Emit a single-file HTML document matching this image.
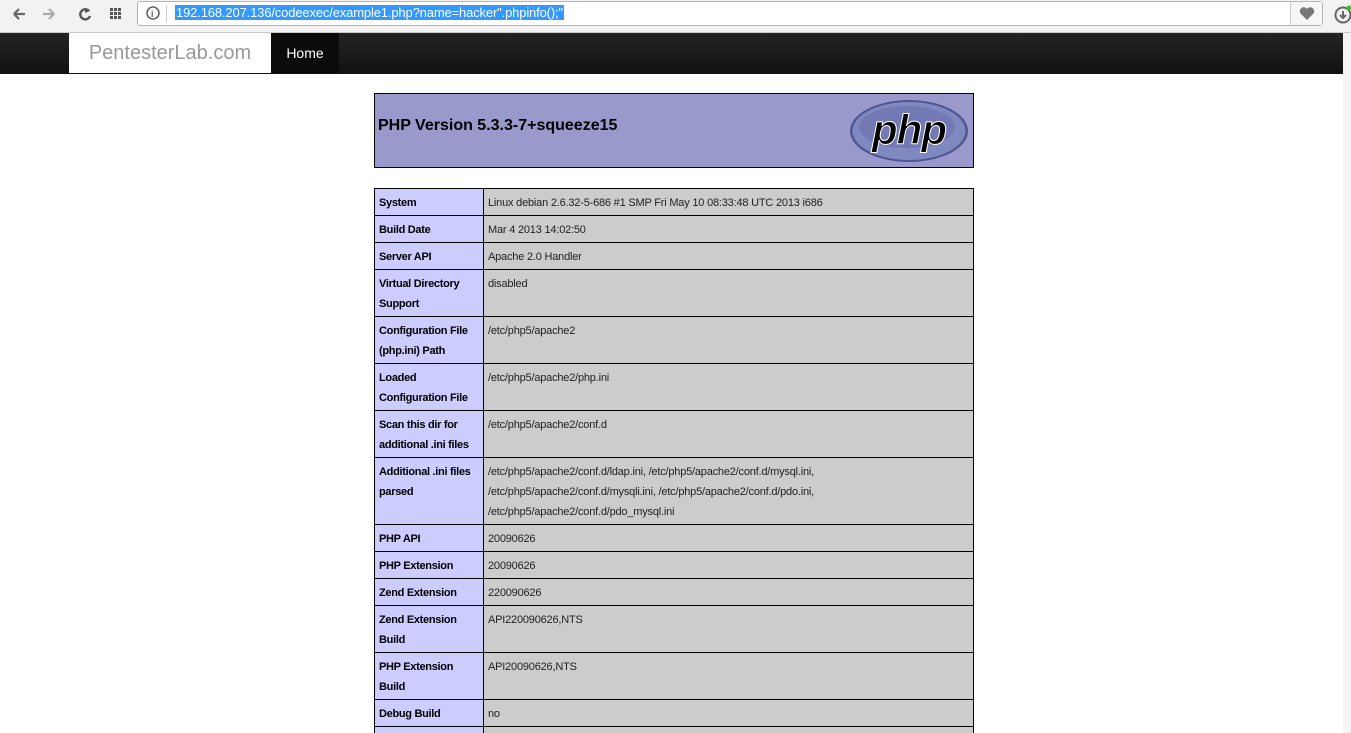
<!DOCTYPE html>
<html><head><meta charset="utf-8"><style>
*{margin:0;padding:0;box-sizing:border-box}
html,body{width:1351px;height:733px;overflow:hidden}
body{background:#fff;font-family:"Liberation Sans",Arial,sans-serif;position:relative}
.chrome{position:absolute;left:0;top:0;width:1351px;height:33px;background:#f2f2f2;border-bottom:1px solid #c8c8c8}
.url{position:absolute;left:137px;top:1px;width:1186px;height:25px;background:#fff;border:1px solid #b5b5b5;border-radius:3px}
.sel{position:absolute;left:175px;top:5px;background:#3399ff;color:#fff;font-size:13px;line-height:15px;padding:0 1px;letter-spacing:-0.15px}
.nav{position:absolute;left:0;top:33px;width:1343px;height:41px;background:linear-gradient(#242424,#111)}
.logo{position:absolute;left:69px;top:0;width:202px;height:40px;background:#fff;color:#999;font-size:20px;line-height:40px;text-align:center}
.home{position:absolute;left:271px;top:0;width:68px;height:40px;background:#0b0b0b;color:#fff;font-size:14px;line-height:40px;text-align:center}
.hdr{position:absolute;left:374px;top:93px;width:600px;height:75px;background:#9999cc;border:1px solid #000}
.hdr h1{position:absolute;left:3px;top:23px;font-size:16px;font-weight:bold;color:#000}
.c{position:absolute;border:1px solid #000;font-size:11px;line-height:20px;padding:4px 3px 0 4px;color:#000;letter-spacing:-0.2px}
.l{left:374px;width:110px;background:#ccccff;font-weight:bold;letter-spacing:-0.3px}
.v{left:483px;width:491px;background:#cccccc;color:#222}
.sb{position:absolute;left:1343px;top:33px;width:8px;height:700px;background:#f4f4f4}
</style></head><body>
<div class="chrome">
<svg style="position:absolute;left:12px;top:7px" width="100" height="14"><path d="M2 7h11M2 7l5-5M2 7l5 5" stroke="#666" stroke-width="2.2" fill="none"/><path d="M31 7h11M42 7l-5-5M42 7l-5 5" stroke="#aaa" stroke-width="2.2" fill="none"/><path d="M77 4a5 5 0 1 0 1 5" stroke="#555" stroke-width="2.4" fill="none"/><path d="M73 1l5 3-5 2z" fill="#555"/></svg>
<svg style="position:absolute;left:110px;top:8px" width="12" height="12"><g fill="#555"><rect x="0" y="0" width="3" height="3"/><rect x="4" y="0" width="3" height="3"/><rect x="8" y="0" width="3" height="3"/><rect x="0" y="4" width="3" height="3"/><rect x="4" y="4" width="3" height="3"/><rect x="8" y="4" width="3" height="3"/><rect x="0" y="8" width="3" height="3"/><rect x="4" y="8" width="3" height="3"/><rect x="8" y="8" width="3" height="3"/></g></svg>
<div class="url"><svg style="position:absolute;left:8px;top:4px" width="14" height="14"><circle cx="7" cy="7" r="6" fill="none" stroke="#666" stroke-width="1.6"/><text x="5" y="11" font-size="9" font-weight="bold" fill="#666" font-family="Liberation Sans">i</text></svg><div style="position:absolute;left:28px;top:3px;width:1px;height:17px;background:#ccc"></div><div style="position:absolute;right:0;top:0;width:32px;height:23px;border-left:1px solid #ccc;background:#f6f6f6"><svg style="position:absolute;left:8px;top:4px" width="16" height="15"><path d="M8 14L1.5 7.5A3.8 3.8 0 0 1 8 3a3.8 3.8 0 0 1 6.5 4.5z" fill="#777"/></svg></div></div>
<div class="sel">192.168.207.136/codeexec/example1.php?name=hacker".phpinfo();"</div>
<svg style="position:absolute;left:1333px;top:5px" width="18" height="20"><circle cx="10" cy="10" r="7.5" fill="none" stroke="#666" stroke-width="2"/><path d="M10 6v7M7 10l3 3 3-3" stroke="#666" stroke-width="2" fill="none"/><circle cx="16" cy="3" r="2.5" fill="#2c2"/></svg>
</div>
<div class="nav"><div class="logo">PentesterLab.com</div><div class="home">Home</div></div>
<div class="sb"></div>
<div class="hdr"><h1>PHP Version 5.3.3-7+squeeze15</h1>
<svg style="position:absolute;left:474px;top:5px" width="122" height="64"><ellipse cx="60" cy="32" rx="59" ry="31" fill="#4f5590"/><ellipse cx="60" cy="32" rx="56.5" ry="29" fill="#8088c0"/><ellipse cx="58" cy="28" rx="48" ry="21" fill="#7379b3"/><text x="60" y="45" text-anchor="middle" font-size="42" font-weight="bold" font-style="italic" fill="#000" stroke="#fff" stroke-width="1" font-family="Liberation Sans" letter-spacing="-1">php</text></svg>
</div>
<div class="c l" style="top:188px;height:28px">System</div><div class="c v" style="top:188px;height:28px">Linux debian 2.6.32-5-686 #1 SMP Fri May 10 08:33:48 UTC 2013 i686</div>
<div class="c l" style="top:215px;height:28px">Build Date</div><div class="c v" style="top:215px;height:28px">Mar 4 2013 14:02:50</div>
<div class="c l" style="top:242px;height:28px">Server API</div><div class="c v" style="top:242px;height:28px">Apache 2.0 Handler</div>
<div class="c l" style="top:269px;height:48px">Virtual Directory Support</div><div class="c v" style="top:269px;height:48px">disabled</div>
<div class="c l" style="top:316px;height:48px">Configuration File (php.ini) Path</div><div class="c v" style="top:316px;height:48px">/etc/php5/apache2</div>
<div class="c l" style="top:363px;height:48px">Loaded Configuration File</div><div class="c v" style="top:363px;height:48px">/etc/php5/apache2/php.ini</div>
<div class="c l" style="top:410px;height:48px">Scan this dir for additional .ini files</div><div class="c v" style="top:410px;height:48px">/etc/php5/apache2/conf.d</div>
<div class="c l" style="top:457px;height:68px">Additional .ini files parsed</div><div class="c v" style="top:457px;height:68px">/etc/php5/apache2/conf.d/ldap.ini, /etc/php5/apache2/conf.d/mysql.ini,<br>/etc/php5/apache2/conf.d/mysqli.ini, /etc/php5/apache2/conf.d/pdo.ini,<br>/etc/php5/apache2/conf.d/pdo_mysql.ini</div>
<div class="c l" style="top:524px;height:28px">PHP API</div><div class="c v" style="top:524px;height:28px">20090626</div>
<div class="c l" style="top:551px;height:28px">PHP Extension</div><div class="c v" style="top:551px;height:28px">20090626</div>
<div class="c l" style="top:578px;height:28px">Zend Extension</div><div class="c v" style="top:578px;height:28px">220090626</div>
<div class="c l" style="top:605px;height:48px">Zend Extension Build</div><div class="c v" style="top:605px;height:48px">API220090626,NTS</div>
<div class="c l" style="top:652px;height:48px">PHP Extension Build</div><div class="c v" style="top:652px;height:48px">API20090626,NTS</div>
<div class="c l" style="top:699px;height:28px">Debug Build</div><div class="c v" style="top:699px;height:28px">no</div>
<div class="c l" style="top:726px;height:28px"></div><div class="c v" style="top:726px;height:28px"></div>
</body></html>
